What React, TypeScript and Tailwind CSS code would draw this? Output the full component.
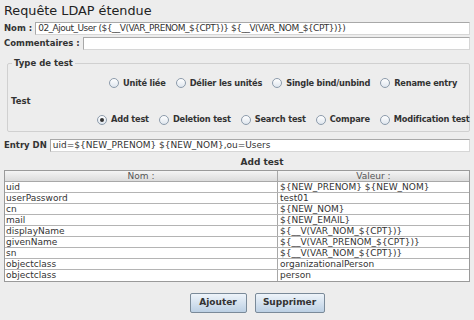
import React from "react";

type Attr = { nom: string; valeur: string };

const attributes: Attr[] = [
  { nom: "uid", valeur: "${NEW_PRENOM} ${NEW_NOM}" },
  { nom: "userPassword", valeur: "test01" },
  { nom: "cn", valeur: "${NEW_NOM}" },
  { nom: "mail", valeur: "${NEW_EMAIL}" },
  { nom: "displayName", valeur: "${__V(VAR_NOM_${CPT})}" },
  { nom: "givenName", valeur: "${__V(VAR_PRENOM_${CPT})}" },
  { nom: "sn", valeur: "${__V(VAR_NOM_${CPT})}" },
  { nom: "objectclass", valeur: "organizationalPerson" },
  { nom: "objectclass", valeur: "person" },
];

function Radio({ label, checked }: { label: string; checked?: boolean }) {
  return (
    <div className="flex items-center gap-[4px] whitespace-nowrap shrink-0">
      <span className="w-[10px] h-[10px] rounded-full border border-[#8c9bab] bg-gradient-to-b from-white to-[#dfe6ee] flex items-center justify-center">
        {checked && <span className="w-[4px] h-[4px] rounded-full bg-[#333]" />}
      </span>
      <span className="font-bold text-[8.25px] tracking-[-0.2px] text-[#333]">{label}</span>
    </div>
  );
}

function Field({ value, tight }: { value?: string; tight?: boolean }) {
  return (
    <div
      className={
        "flex-1 h-[13px] border border-[#a8a8a8] border-r-[#d6d6d6] border-b-[#d6d6d6] bg-white px-[2px] leading-[11px] text-[9px] text-[#333] whitespace-nowrap overflow-hidden " +
        (tight ? "tracking-[-0.5px]" : "")
      }
    >
      {value}
    </div>
  );
}

export default function App() {
  return (
    <div className="w-[474px] h-[320px] bg-[#ededed] overflow-hidden font-['DejaVu_Sans',sans-serif] text-[9px] text-[#333] pl-[4px] pr-[4px]">
      <h1 className="text-[12.8px] leading-[18px] pt-[2px] text-[#222]">Requête LDAP étendue</h1>

      <div className="flex items-center gap-[3px] mt-[2px]">
        <span className="font-bold text-[8.5px]">Nom :</span>
        <Field value="02_Ajout_User (${__V(VAR_PRENOM_${CPT})} ${__V(VAR_NOM_${CPT})})" tight />
      </div>
      <div className="flex items-center gap-[3px] mt-[2px]">
        <span className="font-bold text-[8.5px]">Commentaires :</span>
        <Field />
      </div>

      <fieldset className="ml-[3px] mt-[8px] h-[74px] border border-[#d0d0d0] rounded-[2px] px-[3px] min-w-0">
        <legend className="font-bold text-[8.5px] ml-[1px] px-[2px] leading-[10px]">Type de test</legend>
        <div className="flex gap-[10px] ml-[98px] mt-[9px]">
          <Radio label="Unité liée" />
          <Radio label="Délier les unités" />
          <Radio label="Single bind/unbind" />
          <Radio label="Rename entry" />
        </div>
        <div className="font-bold text-[8.5px] mt-[7px] leading-[10px]">Test</div>
        <div className="flex gap-[10px] ml-[86px] mt-[7px]">
          <Radio label="Add test" checked />
          <Radio label="Deletion test" />
          <Radio label="Search test" />
          <Radio label="Compare" />
          <Radio label="Modification test" />
        </div>
      </fieldset>

      <div className="flex items-center gap-[3px] mt-[7px]">
        <span className="font-bold text-[8.5px]">Entry DN</span>
        <Field value="uid=${NEW_PRENOM} ${NEW_NOM},ou=Users" />
      </div>

      <div className="font-bold text-center pl-[50px] leading-[10px] mt-[5px]">Add test</div>

      <div className="mt-[3px] border border-[#9a9a9a] bg-white">
        <div className="grid grid-cols-[273px_1fr] h-[11px] leading-[10px] bg-gradient-to-b from-[#f4f4f4] to-[#dcdcdc] border-b border-[#a8a8a8] text-[#555]">
          <div className="text-center border-r border-[#a8a8a8]">Nom :</div>
          <div className="text-center">Valeur :</div>
        </div>
        {attributes.map((a, i) => (
          <div
            key={i}
            className="grid grid-cols-[273px_1fr] h-[11px] leading-[10px] border-b border-[#b4b4b4] last:border-b-0"
          >
            <div className="pl-[1px] border-r border-[#a8a8a8] whitespace-nowrap overflow-hidden">{a.nom}</div>
            <div className="pl-[2px] whitespace-nowrap overflow-hidden">{a.valeur}</div>
          </div>
        ))}
      </div>

      <div className="flex justify-center gap-[8px] mt-[11px] pl-[40px]">
        <button className="w-[57px] h-[20px] border border-[#7a8a99] rounded-[2px] bg-gradient-to-b from-[#eef4fa] to-[#bcd0e4] font-bold text-[#333]">
          Ajouter
        </button>
        <button className="w-[70px] h-[20px] border border-[#7a8a99] rounded-[2px] bg-gradient-to-b from-[#eef4fa] to-[#bcd0e4] font-bold text-[#333]">
          Supprimer
        </button>
      </div>
    </div>
  );
}
